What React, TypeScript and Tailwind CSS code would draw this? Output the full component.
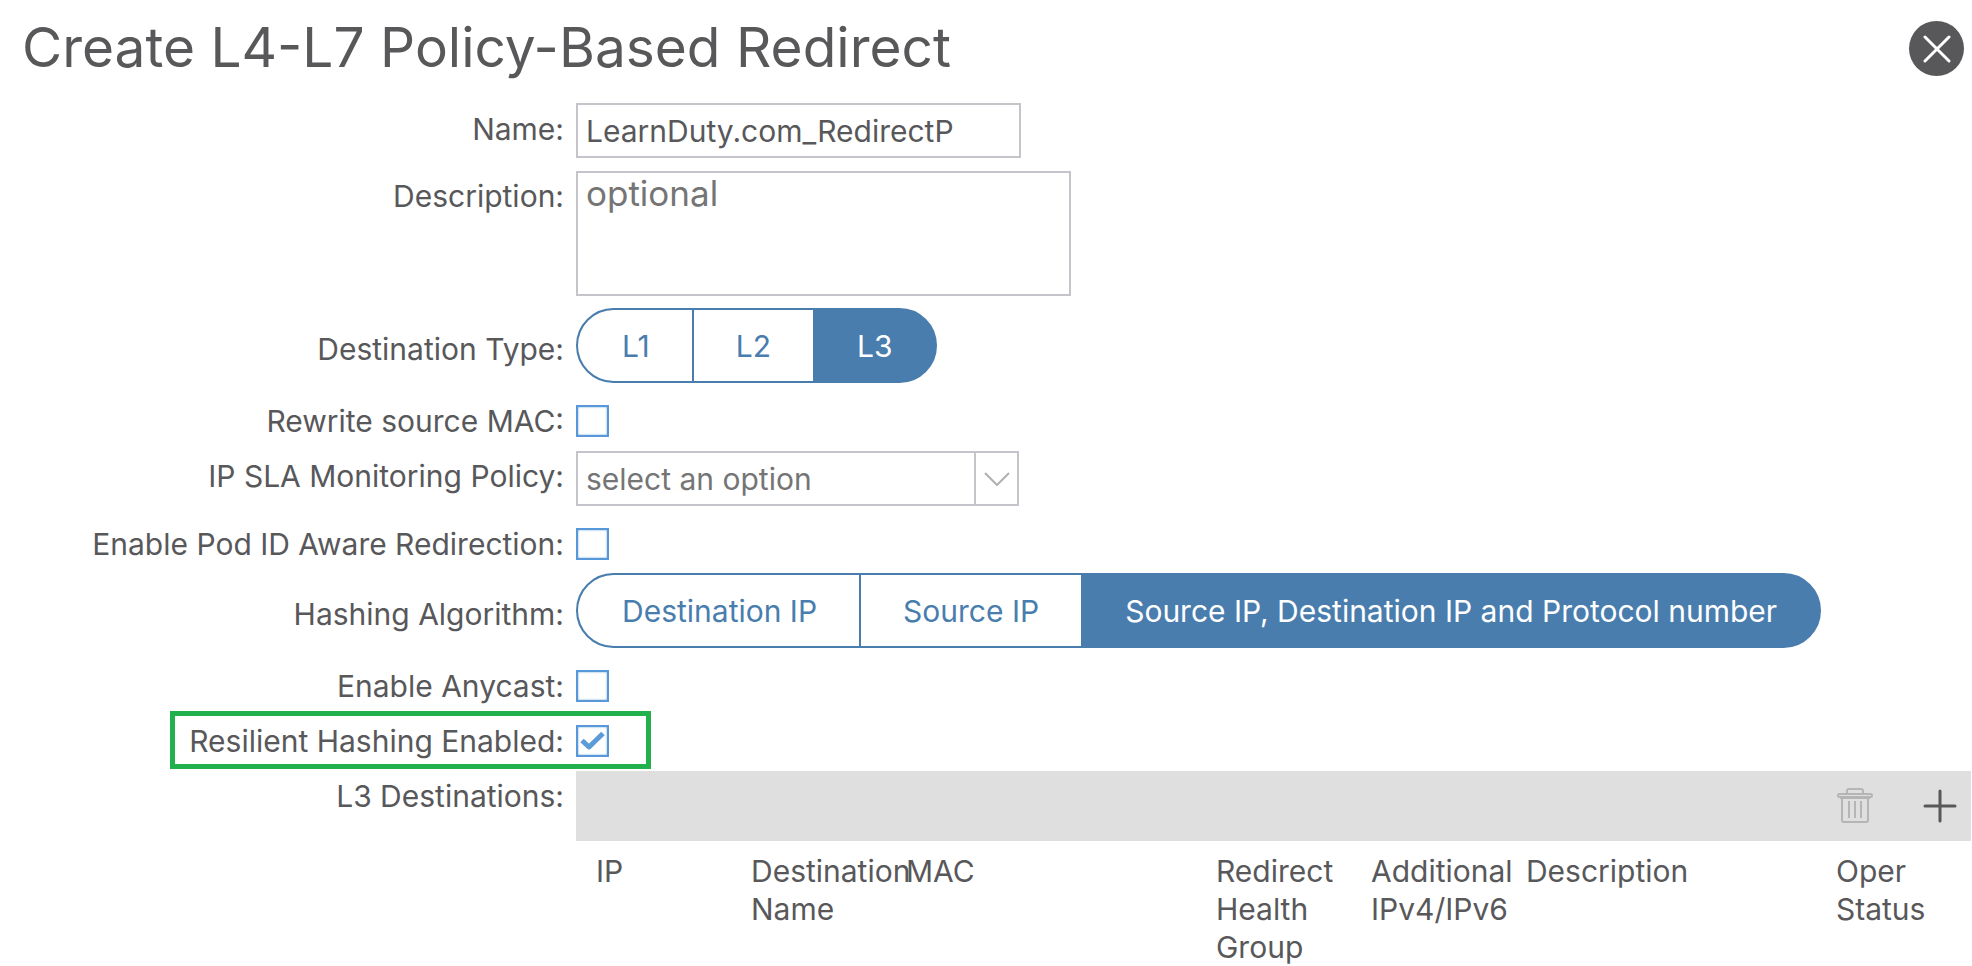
import React, { useState } from "react";

const COLUMNS = [
  { label: "IP", width: "w-1/9" },
  { label: "Destination Name", width: "w-1/9" },
  { label: "MAC", width: "w-2/9" },
  { label: "Redirect Health Group", width: "w-1/9" },
  { label: "Additional IPv4/IPv6", width: "w-1/9" },
  { label: "Description", width: "w-2/9" },
  { label: "Oper Status", width: "w-1/9" }
];

interface SegmentedProps {
  labelledBy: string;
  options: string[];
  value: string;
  onChange: (value: string) => void;
}

function Segmented({ labelledBy, options, value, onChange }: SegmentedProps) {
  return (
    <div
      role="group"
      aria-labelledby={labelledBy}
      className="flex h-[75px] rounded-full border-2 border-[#497dae] bg-[#497dae] overflow-hidden"
    >
      {options.map(option => (
        <button
          key={option}
          type="button"
          aria-pressed={option === value}
          onClick={() => onChange(option)}
          className={
            option === value
              ? "px-[42px] first:pl-11 bg-[#497dae] text-white cursor-pointer whitespace-nowrap"
              : "px-[42px] first:pl-11 bg-white text-[#497dae] border-r-2 border-[#497dae] last:border-r-0 cursor-pointer whitespace-nowrap"
          }
        >
          {option}
        </button>
      ))}
    </div>
  );
}

interface CheckFieldProps {
  id: string;
  label: string;
  defaultChecked?: boolean;
  highlighted?: boolean;
}

function CheckField({ id, label, defaultChecked, highlighted }: CheckFieldProps) {
  return (
    <div
      className={
        highlighted
          ? "flex items-center w-[481px] h-[58px] ml-[170px] mt-[5px] mb-[2px] pt-[2px] border-5 border-[#22b14c]"
          : "flex items-center h-10"
      }
    >
      <label htmlFor={id} className={highlighted ? "w-[401px] pr-3 text-right shrink-0" : "w-[576px] pr-3 text-right shrink-0"}>
        {label}:
      </label>
      <span className="relative flex">
        <input
          id={id}
          type="checkbox"
          defaultChecked={defaultChecked}
          className="peer appearance-none w-[33px] h-8 bg-white border-2 border-[#5897d8] shadow-[inset_0_0_2px_#5897d8] cursor-pointer"
        />
        <svg
          viewBox="0 0 33 32"
          className="absolute inset-0 w-[33px] h-8 hidden peer-checked:block pointer-events-none"
          fill="none"
          stroke="#5b9bd8"
          strokeWidth="5"
          strokeLinejoin="round"
        >
          <path d="M6 15.500L13 22L27 8.500" />
        </svg>
      </span>
    </div>
  );
}

export default function App() {
  const [name, setName] = useState("LearnDuty.com_RedirectP");
  const [destType, setDestType] = useState("L3");
  const [hashing, setHashing] = useState("Source IP, Destination IP and Protocol number");

  return (
    <div className="bg-white font-['Inter',sans-serif] text-[30px] leading-10 text-[#58585b]">
      <header className="flex items-start justify-between h-[103px] pl-[22px] pr-2">
        <h1 className="pt-[13px] text-[55px] leading-[68px] font-normal">Create L4-L7 Policy-Based Redirect</h1>
        <button
          type="button"
          aria-label="Close"
          className="mt-[21px] w-[55px] h-[55px] rounded-full bg-[#58585b] flex items-center justify-center cursor-pointer"
        >
          <svg viewBox="0 0 28 28" className="w-7 h-7" fill="none" stroke="#fff" strokeWidth="3" strokeLinecap="round">
            <path d="M2 2L26 26M26 2L2 26" />
          </svg>
        </button>
      </header>

      <form className="flex flex-col" onSubmit={e => e.preventDefault()}>
        <div className="flex items-start mb-[13px]">
          <label htmlFor="name" className="w-[576px] pt-[6px] pr-3 text-right shrink-0">Name:</label>
          <input
            id="name"
            type="text"
            value={name}
            onChange={e => setName(e.target.value)}
            className="w-[445px] h-[55px] px-2 bg-white border-2 border-[#c4c4ca] focus:outline-none"
          />
        </div>

        <div className="flex items-start mb-3">
          <label htmlFor="description" className="w-[576px] pt-[5px] pr-3 text-right shrink-0">Description:</label>
          <textarea
            id="description"
            placeholder="optional"
            className="w-[495px] h-[125px] px-2 text-[35px] leading-10 bg-white border-2 border-[#c4c4ca] placeholder:text-[#757575] resize-none focus:outline-none"
          />
        </div>

        <div className="flex items-start mb-[18px]">
          <span id="dest-type" className="w-[576px] pt-[21px] pr-3 text-right shrink-0">Destination Type:</span>
          <Segmented labelledBy="dest-type" options={["L1", "L2", "L3"]} value={destType} onChange={setDestType} />
        </div>

        <CheckField id="rewrite-mac" label="Rewrite source MAC" />

        <div className="flex items-start mt-[10px] mb-[18px]">
          <label htmlFor="sla" className="w-[576px] pt-[5px] pr-3 text-right shrink-0">IP SLA Monitoring Policy:</label>
          <div className="relative">
            <select
              id="sla"
              className="appearance-none w-[443px] h-[55px] pl-2 bg-white border-2 border-[#c4c4ca] text-[#757575] focus:outline-none"
            >
              <option>select an option</option>
            </select>
            <span className="absolute inset-y-0 right-0 w-[45px] border-2 border-[#c4c4ca] flex items-center justify-center pointer-events-none">
              <svg viewBox="0 0 26 14" className="w-[26px] h-[14px]" fill="none" stroke="#b0b0b0" strokeWidth="2">
                <path d="M1 1L13 13L25 1" />
              </svg>
            </span>
          </div>
        </div>

        <CheckField id="pod-aware" label="Enable Pod ID Aware Redirection" />

        <div className="flex items-start mt-[9px] mb-[18px]">
          <span id="hashing" className="w-[576px] pt-[21px] pr-3 text-right shrink-0">Hashing Algorithm:</span>
          <Segmented
            labelledBy="hashing"
            options={["Destination IP", "Source IP", "Source IP, Destination IP and Protocol number"]}
            value={hashing}
            onChange={setHashing}
          />
        </div>

        <CheckField id="anycast" label="Enable Anycast" />
        <CheckField id="resilient" label="Resilient Hashing Enabled" defaultChecked highlighted />

        <div className="flex items-start">
          <span id="destinations" className="w-[576px] pt-[5px] pr-3 text-right shrink-0">L3 Destinations:</span>
          <div className="flex-1 min-w-0 mr-px">
            <div className="flex items-center justify-end gap-[50px] h-[70px] pr-[14px] bg-[#dfdfdf]">
              <button type="button" aria-label="Delete" className="cursor-pointer">
                <svg viewBox="0 0 36 36" className="w-9 h-9" fill="none" stroke="#b5b5b5" strokeWidth="2">
                  <path d="M10 5V3Q10 1 12 1H24Q26 1 26 3V5" />
                  <rect x="1" y="6" width="34" height="3" rx="1.500" />
                  <path d="M3 10H33" />
                  <path d="M5 10V32Q5 34 7 34H29Q31 34 31 32V10M12 13V30M18 13V30M24 13V30" />
                </svg>
              </button>
              <button type="button" aria-label="Add" className="cursor-pointer">
                <svg viewBox="0 0 34 34" className="w-[34px] h-[34px]" fill="none" stroke="#58585b" strokeWidth="3" strokeLinecap="round">
                  <path d="M17 2V32M2 17H32" />
                </svg>
              </button>
            </div>
            <table aria-labelledby="destinations" className="w-full table-fixed">
              <thead>
                <tr>
                  {COLUMNS.map(col => (
                    <th key={col.label} className={`${col.width} pl-5 pt-[11px] text-left align-top font-normal leading-[38px]`}>
                      {col.label}
                    </th>
                  ))}
                </tr>
              </thead>
            </table>
          </div>
        </div>
      </form>
    </div>
  );
}
